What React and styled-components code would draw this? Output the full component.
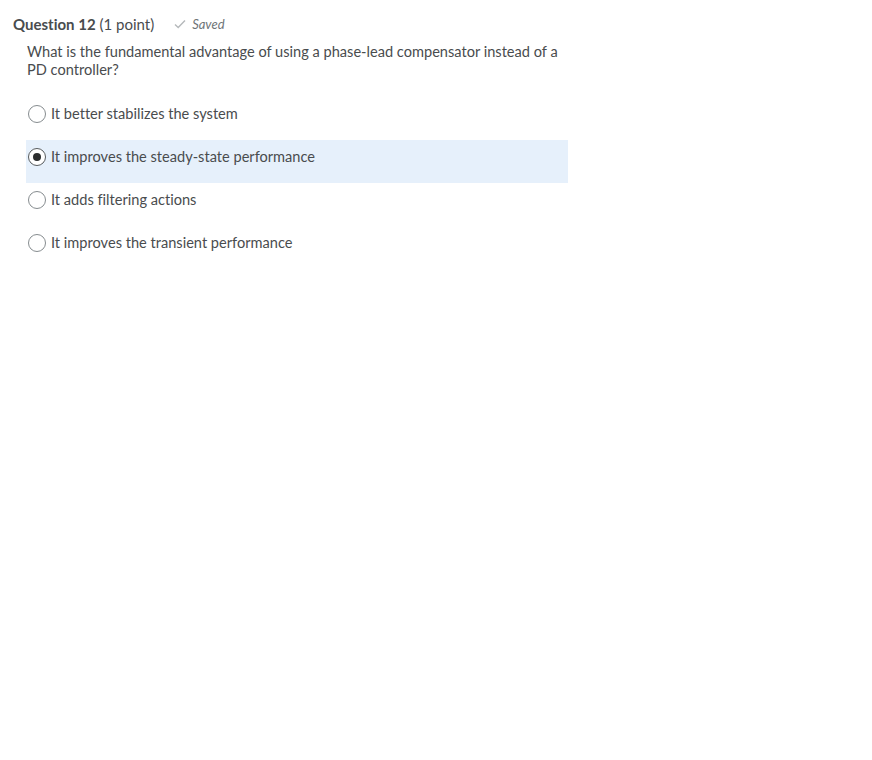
import React from "react";
import styled, { createGlobalStyle } from "styled-components";

const Global = createGlobalStyle`
  html, body { margin: 0; padding: 0; background: #fff; }
  body {
    font-family: Lato, "Open Sans", sans-serif;
    color: #494c4e;
    font-variant-ligatures: none;
  }
`;

const Page = styled.div`
  padding: 14px 0 0 13px;
`;

const Header = styled.div`
  display: flex;
  align-items: center;
  height: 20px;
`;

const Title = styled.h2`
  margin: 0;
  font-size: 15px;
  font-weight: 400;
  line-height: 20px;
  color: #494c4e;
  b { font-weight: 700; }
`;

const Saved = styled.span`
  display: inline-flex;
  align-items: center;
  gap: 6px;
  margin-left: 20px;
  font-size: 13px;
  font-style: italic;
  color: #6e7477;
`;

const Body = styled.div`
  margin-left: 13px;
  width: 542px;
`;

const Question = styled.p`
  margin: 9px 0 0 1px;
  font-size: 14.6px;
  line-height: 18px;
  padding-right: 4px;
`;

const Options = styled.div`
  margin-top: 18px;
  display: flex;
  flex-direction: column;
`;

const Row = styled.label`
  display: flex;
  align-items: center;
  gap: 5px;
  height: 43px;
  box-sizing: border-box;
  padding: 0 0 10px 2px;
  background: ${(p) => (p.$selected ? "#e6f0fb" : "transparent")};
  font-size: 14.6px;
  line-height: 20px;
`;

const Radio = styled.span`
  flex: none;
  width: 18px;
  height: 18px;
  box-sizing: border-box;
  border-radius: 50%;
  border: 1px solid ${(p) => (p.$checked ? "#565a5c" : "#868c8f")};
  background: #fff;
  display: flex;
  align-items: center;
  justify-content: center;
  &::after {
    content: "";
    display: ${(p) => (p.$checked ? "block" : "none")};
    width: 8px;
    height: 8px;
    border-radius: 50%;
    background: #2b2d2e;
  }
`;

const options = [
  "It better stabilizes the system",
  "It improves the steady-state performance",
  "It adds filtering actions",
  "It improves the transient performance",
];

export default function App() {
  const selected = 1;
  return (
    <Page>
      <Global />
      <Header>
        <Title>
          <b>Question 12</b> (1 point)
        </Title>
        <Saved>
          <svg width="12" height="10" viewBox="0 0 12 10">
            <path d="M1 5.5 L4.2 8.5 L11 1.5" fill="none" stroke="#b5b9bb" strokeWidth="1.4" />
          </svg>
          Saved
        </Saved>
      </Header>
      <Body>
        <Question>
          What is the fundamental advantage of using a phase-lead compensator instead of a PD controller?
        </Question>
        <Options>
          {options.map((o, i) => (
            <Row key={o} $selected={i === selected}>
              <Radio $checked={i === selected} />
              {o}
            </Row>
          ))}
        </Options>
      </Body>
    </Page>
  );
}
